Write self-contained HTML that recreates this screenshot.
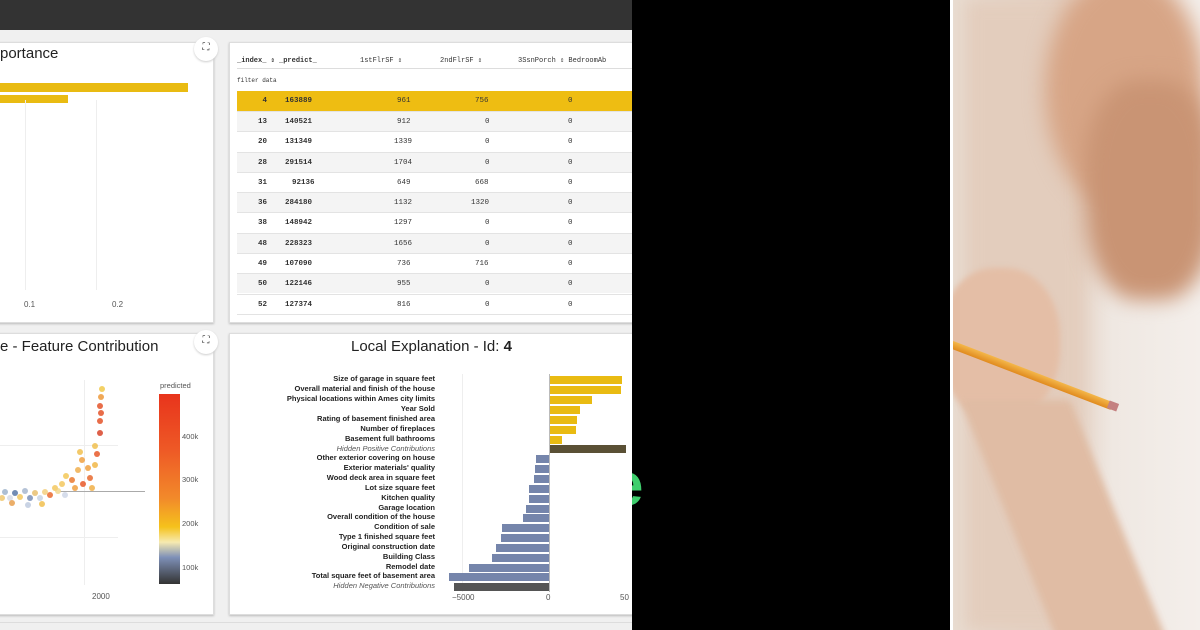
<!DOCTYPE html>
<html><head><meta charset="utf-8"><style>
*{margin:0;padding:0;box-sizing:border-box}
body{width:1200px;height:630px;overflow:hidden;position:relative;background:#000;font-family:"Liberation Sans",sans-serif}
.a{position:absolute}
#L{position:absolute;left:0;top:0;width:632px;height:630px;overflow:hidden;background:#f0f0f0}
.panel{position:absolute;background:#fff;border:1px solid #ddd;box-shadow:0 1px 2px #bbb}
.mono{font-family:"Liberation Mono",monospace;font-size:7px;color:#333}
.row{position:absolute;left:237px;width:395px;height:20px;border-top:1px solid #e3e3e3}
.row span{position:absolute;top:6px;font-family:"Liberation Mono",monospace;font-size:7.5px;color:#333}
.lab{position:absolute;right:197px;font-size:7.5px;font-weight:bold;color:#222;white-space:nowrap;line-height:10px}
.bar{position:absolute;height:8px}
</style></head><body>
<div id="L">
<div class="a" style="left:0;top:0;width:632px;height:30px;background:#333"></div>

<div class="panel" style="left:-5px;top:42px;width:219px;height:281px"></div>
<div class="a" style="left:0;top:45px;font-size:15px;color:#222">portance</div>
<div class="a" style="left:0;top:83px;width:188px;height:9px;background:#e9bb12"></div>
<div class="a" style="left:0;top:95px;width:68px;height:8px;background:#e9bb12"></div>
<div class="a" style="left:25px;top:100px;width:1px;height:190px;background:#eee"></div>
<div class="a" style="left:96px;top:100px;width:1px;height:190px;background:#eee"></div>
<div class="a" style="left:24px;top:300px;font-size:8px;color:#555">0.1</div>
<div class="a" style="left:112px;top:300px;font-size:8px;color:#555">0.2</div>
<div class="a" style="left:194px;top:37px;width:24px;height:24px;border-radius:50%;background:#fff;box-shadow:0 1px 2px #ccc;font-size:10px;text-align:center;line-height:22px;color:#333">⛶</div>

<div class="panel" style="left:229px;top:42px;width:420px;height:281px"></div>
<div class="a mono" style="left:237px;top:56px;font-weight:bold">_index_ ⇕ _predict_</div>
<div class="a mono" style="left:360px;top:56px">1stFlrSF ⇕</div>
<div class="a mono" style="left:440px;top:56px">2ndFlrSF ⇕</div>
<div class="a mono" style="left:518px;top:56px;white-space:nowrap">3SsnPorch ⇕ BedroomAb</div>
<div class="a" style="left:237px;top:68px;width:395px;height:1px;background:#ddd"></div>
<div class="a mono" style="left:237px;top:77px;font-size:6px">filter data</div>
<div class="row" style="top:91px;background:#eebd12;border:none"><span style="right:365px;font-weight:bold">4</span><span style="left:48px;font-weight:bold">163889</span><span style="left:160px">961</span><span style="left:238px">756</span><span style="left:331px">0</span></div>
<div class="row" style="top:111px;background:#f4f4f4"><span style="right:365px;font-weight:bold">13</span><span style="left:48px;font-weight:bold">140521</span><span style="left:160px">912</span><span style="left:248px">0</span><span style="left:331px">0</span></div>
<div class="row" style="top:131px"><span style="right:365px;font-weight:bold">20</span><span style="left:48px;font-weight:bold">131349</span><span style="left:157px">1339</span><span style="left:248px">0</span><span style="left:331px">0</span></div>
<div class="row" style="top:152px;background:#f4f4f4"><span style="right:365px;font-weight:bold">28</span><span style="left:48px;font-weight:bold">291514</span><span style="left:157px">1704</span><span style="left:248px">0</span><span style="left:331px">0</span></div>
<div class="row" style="top:172px"><span style="right:365px;font-weight:bold">31</span><span style="left:55px;font-weight:bold">92136</span><span style="left:160px">649</span><span style="left:238px">668</span><span style="left:331px">0</span></div>
<div class="row" style="top:192px;background:#f4f4f4"><span style="right:365px;font-weight:bold">36</span><span style="left:48px;font-weight:bold">284180</span><span style="left:157px">1132</span><span style="left:234px">1320</span><span style="left:331px">0</span></div>
<div class="row" style="top:212px"><span style="right:365px;font-weight:bold">38</span><span style="left:48px;font-weight:bold">148942</span><span style="left:157px">1297</span><span style="left:248px">0</span><span style="left:331px">0</span></div>
<div class="row" style="top:233px;background:#f4f4f4"><span style="right:365px;font-weight:bold">48</span><span style="left:48px;font-weight:bold">228323</span><span style="left:157px">1656</span><span style="left:248px">0</span><span style="left:331px">0</span></div>
<div class="row" style="top:253px"><span style="right:365px;font-weight:bold">49</span><span style="left:48px;font-weight:bold">107090</span><span style="left:160px">736</span><span style="left:238px">716</span><span style="left:331px">0</span></div>
<div class="row" style="top:273px;background:#f4f4f4"><span style="right:365px;font-weight:bold">50</span><span style="left:48px;font-weight:bold">122146</span><span style="left:160px">955</span><span style="left:248px">0</span><span style="left:331px">0</span></div>
<div class="row" style="top:294px"><span style="right:365px;font-weight:bold">52</span><span style="left:48px;font-weight:bold">127374</span><span style="left:160px">816</span><span style="left:248px">0</span><span style="left:331px">0</span></div>
<div class="a" style="left:237px;top:314px;width:395px;height:1px;background:#e3e3e3"></div>

<div class="panel" style="left:-5px;top:333px;width:219px;height:282px"></div>
<div class="a" style="left:0;top:338px;font-size:15px;color:#222">e - Feature Contribution</div>
<div class="a" style="left:194px;top:330px;width:24px;height:24px;border-radius:50%;background:#fff;box-shadow:0 1px 2px #ccc;font-size:10px;text-align:center;line-height:22px;color:#333">⛶</div>
<div class="a" style="left:84px;top:380px;width:1px;height:205px;background:#eee"></div>
<div class="a" style="left:0;top:445px;width:118px;height:1px;background:#eee"></div>
<div class="a" style="left:0;top:537px;width:118px;height:1px;background:#eee"></div>
<div class="a" style="left:60px;top:491px;width:85px;height:1px;background:#aaa"></div>
<svg class="a" style="left:0;top:380px" width="150" height="150">
<g opacity=".85">
<circle cx="102" cy="9" r="3" fill="#f2c94c"/><circle cx="101" cy="17" r="3" fill="#ee9a3a"/><circle cx="100" cy="26" r="3" fill="#e5542a"/><circle cx="101" cy="33" r="3" fill="#e5542a"/><circle cx="100" cy="41" r="3" fill="#e5542a"/><circle cx="100" cy="53" r="3" fill="#d9452a"/>
<circle cx="95" cy="66" r="3" fill="#f0c050"/><circle cx="97" cy="74" r="3" fill="#e85a2a"/><circle cx="80" cy="72" r="3" fill="#f2c050"/><circle cx="82" cy="80" r="3" fill="#f0a040"/><circle cx="78" cy="90" r="3" fill="#f0b050"/><circle cx="88" cy="88" r="3" fill="#f0a040"/><circle cx="95" cy="85" r="3" fill="#f2b848"/><circle cx="90" cy="98" r="3" fill="#e86a30"/><circle cx="72" cy="100" r="3" fill="#eb7a30"/><circle cx="66" cy="96" r="3" fill="#f4c858"/><circle cx="75" cy="108" r="3" fill="#f0a040"/><circle cx="83" cy="104" r="3" fill="#e95a2a"/><circle cx="92" cy="108" r="3" fill="#f0b048"/><circle cx="62" cy="104" r="3" fill="#f4c860"/><circle cx="58" cy="111" r="3" fill="#f2d890"/><circle cx="55" cy="108" r="3" fill="#f4c860"/><circle cx="50" cy="115" r="3" fill="#ea6a30"/>
<circle cx="45" cy="112" r="3" fill="#f4d080"/><circle cx="40" cy="118" r="3" fill="#c8d4e4"/><circle cx="35" cy="113" r="3" fill="#e8c070"/><circle cx="30" cy="118" r="3" fill="#7a90b8"/><circle cx="25" cy="111" r="3" fill="#a8b8d0"/><circle cx="20" cy="117" r="3" fill="#f4c860"/><circle cx="15" cy="113" r="3" fill="#5a78a8"/><circle cx="10" cy="118" r="3" fill="#d8dce8"/><circle cx="5" cy="112" r="3" fill="#a0b4cc"/><circle cx="2" cy="118" r="3" fill="#f0c870"/><circle cx="42" cy="124" r="3" fill="#f2c050"/><circle cx="28" cy="125" r="3" fill="#c0cce0"/><circle cx="12" cy="123" r="3" fill="#e8a050"/><circle cx="65" cy="115" r="3" fill="#d0d8e8"/></g></svg>
<div class="a" style="left:92px;top:592px;font-size:8px;color:#555">2000</div>
<div class="a" style="left:160px;top:381px;font-size:7.5px;color:#555">predicted</div>
<div class="a" style="left:159px;top:394px;width:21px;height:190px;background:linear-gradient(#e8341c,#ee5a26 30%,#f28a2a 55%,#f5c21c 70%,#f6eab0 78%,#7e90b8 86%,#333 100%)"></div>
<div class="a" style="left:182px;top:432px;font-size:7.5px;color:#555">400k</div>
<div class="a" style="left:182px;top:475px;font-size:7.5px;color:#555">300k</div>
<div class="a" style="left:182px;top:519px;font-size:7.5px;color:#555">200k</div>
<div class="a" style="left:182px;top:563px;font-size:7.5px;color:#555">100k</div>

<div class="panel" style="left:229px;top:333px;width:420px;height:282px"></div>
<div class="a" style="left:351px;top:338px;font-size:15px;color:#222">Local Explanation - Id: <b>4</b></div>
<div class="a" style="left:549px;top:374px;width:1px;height:218px;background:#bbb"></div>
<div class="a" style="left:462px;top:374px;width:1px;height:218px;background:#eee"></div>
<div class="lab" style="top:374px">Size of garage in square feet</div>
<div class="lab" style="top:384px">Overall material and finish of the house</div>
<div class="lab" style="top:394px">Physical locations within Ames city limits</div>
<div class="lab" style="top:404px">Year Sold</div>
<div class="lab" style="top:414px">Rating of basement finished area</div>
<div class="lab" style="top:424px">Number of fireplaces</div>
<div class="lab" style="top:434px">Basement full bathrooms</div>
<div class="lab" style="top:444px;font-weight:normal;font-style:italic;color:#555">Hidden Positive Contributions</div>
<div class="lab" style="top:453px">Other exterior covering on house</div>
<div class="lab" style="top:463px">Exterior materials' quality</div>
<div class="lab" style="top:473px">Wood deck area in square feet</div>
<div class="lab" style="top:483px">Lot size square feet</div>
<div class="lab" style="top:493px">Kitchen quality</div>
<div class="lab" style="top:503px">Garage location</div>
<div class="lab" style="top:512px">Overall condition of the house</div>
<div class="lab" style="top:522px">Condition of sale</div>
<div class="lab" style="top:532px">Type 1 finished square feet</div>
<div class="lab" style="top:542px">Original construction date</div>
<div class="lab" style="top:552px">Building Class</div>
<div class="lab" style="top:562px">Remodel date</div>
<div class="lab" style="top:571px">Total square feet of basement area</div>
<div class="lab" style="top:581px;font-weight:normal;font-style:italic;color:#555">Hidden Negative Contributions</div>
<div class="bar" style="left:550px;top:376px;width:72px;background:#e9bb12"></div>
<div class="bar" style="left:550px;top:386px;width:71px;background:#e9bb12"></div>
<div class="bar" style="left:550px;top:396px;width:42px;background:#e9bb12"></div>
<div class="bar" style="left:550px;top:406px;width:30px;background:#e9bb12"></div>
<div class="bar" style="left:550px;top:416px;width:27px;background:#e9bb12"></div>
<div class="bar" style="left:550px;top:426px;width:26px;background:#e9bb12"></div>
<div class="bar" style="left:550px;top:436px;width:12px;background:#e9bb12"></div>
<div class="bar" style="left:550px;top:445px;width:76px;background:#5a5035"></div>
<div class="bar" style="left:536px;top:455px;width:13px;background:#7585ab"></div>
<div class="bar" style="left:535px;top:465px;width:14px;background:#7585ab"></div>
<div class="bar" style="left:534px;top:475px;width:15px;background:#7585ab"></div>
<div class="bar" style="left:529px;top:485px;width:20px;background:#7585ab"></div>
<div class="bar" style="left:529px;top:495px;width:20px;background:#7585ab"></div>
<div class="bar" style="left:526px;top:505px;width:23px;background:#7585ab"></div>
<div class="bar" style="left:523px;top:514px;width:26px;background:#7585ab"></div>
<div class="bar" style="left:502px;top:524px;width:47px;background:#7585ab"></div>
<div class="bar" style="left:501px;top:534px;width:48px;background:#7585ab"></div>
<div class="bar" style="left:496px;top:544px;width:53px;background:#7585ab"></div>
<div class="bar" style="left:492px;top:554px;width:57px;background:#7585ab"></div>
<div class="bar" style="left:469px;top:564px;width:80px;background:#7585ab"></div>
<div class="bar" style="left:449px;top:573px;width:100px;background:#7585ab"></div>
<div class="bar" style="left:454px;top:583px;width:95px;background:#555"></div>
<div class="a" style="left:452px;top:593px;font-size:8px;color:#555">−5000</div>
<div class="a" style="left:546px;top:593px;font-size:8px;color:#555">0</div>
<div class="a" style="left:620px;top:593px;font-size:8px;color:#555">50</div>
<div class="a" style="left:0;top:622px;width:632px;height:1px;background:#ddd"></div>
</div>

<!-- green e fragment -->
<div class="a" style="left:632px;top:455px;width:11px;height:60px;overflow:hidden"><div style="margin-left:-22px;font-size:60px;font-weight:bold;color:#3fcf6e;line-height:60px">e</div></div>

<!-- photo -->
<div class="a" style="left:950px;top:0;width:250px;height:630px;overflow:hidden;background:#efe9e4">
<div class="a" style="left:0;top:0;width:250px;height:630px;background:linear-gradient(90deg,#e9ddd2 0,#e3cfc0 45%,#efe8e2 65%,#f4efeb 100%)"></div>
<div class="a" style="left:15px;top:0;width:120px;height:630px;background:#e3cdbd;filter:blur(8px)"></div>
<div class="a" style="left:95px;top:-30px;width:160px;height:240px;border-radius:50%;background:#d7a586;filter:blur(10px)"></div>
<div class="a" style="left:135px;top:80px;width:130px;height:220px;border-radius:40%;background:#c99474;filter:blur(10px)"></div>
<div class="a" style="left:-10px;top:268px;width:120px;height:150px;border-radius:45%;background:#e4bea6;filter:blur(3px)"></div>
<div class="a" style="left:10px;top:400px;width:110px;height:260px;background:#e0bca4;filter:blur(4px);transform:skewX(22deg);transform-origin:top"></div>
<div class="a" style="left:0;top:340px;width:175px;height:8px;background:linear-gradient(#f4b74a,#e08a1e);transform:rotate(21deg);transform-origin:left center;border-radius:3px"></div>
<div class="a" style="left:158px;top:402px;width:10px;height:8px;background:#c48080;transform:rotate(21deg)"></div>
</div>
<div class="a" style="left:950px;top:0;width:3px;height:630px;background:#fff"></div>
</body></html>
